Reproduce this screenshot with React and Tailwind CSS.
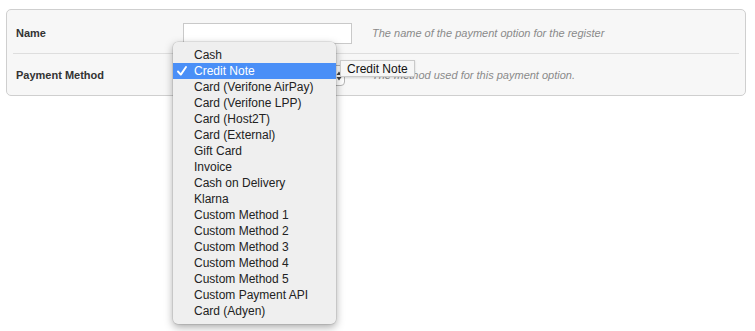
import React from "react";

const methods = [
	"Cash",
	"Credit Note",
	"Card (Verifone AirPay)",
	"Card (Verifone LPP)",
	"Card (Host2T)",
	"Card (External)",
	"Gift Card",
	"Invoice",
	"Cash on Delivery",
	"Klarna",
	"Custom Method 1",
	"Custom Method 2",
	"Custom Method 3",
	"Custom Method 4",
	"Custom Method 5",
	"Custom Payment API",
	"Card (Adyen)",
];

const App = () => {
	const selected = "Credit Note";

	return (
		<div
			className="relative w-[755px] h-[331px] bg-white overflow-hidden"
			style={{ fontFamily: '"Liberation Sans", Arial, sans-serif' }}
		>
			<div className="ml-[6px] mt-[9px] w-[740px] rounded-[5px] border border-[#cfcfcf] bg-[#f7f7f7] px-[6px]">
				<div className="flex items-center h-[44px] pt-[4px] border-b border-[#dedede]">
					<div className="w-[170px] pl-[3px] text-[11px] font-bold text-[#333]">Name</div>
					<input
						type="text"
						className="w-[169px] h-[21px] border border-[#c9c9c9] bg-white outline-none"
					/>
					<div className="ml-[20px] text-[11px] italic text-[#8a8a8a]">
						The name of the payment option for the register
					</div>
				</div>
				<div className="flex items-center h-[41px] pt-[2px]">
					<div className="w-[170px] pl-[3px] text-[11px] font-bold text-[#333]">Payment Method</div>
					<div className="relative w-[162px] h-[21px] rounded-[4px] border border-[#b5b5b5] bg-white">
						<svg className="absolute right-[2px] top-[4px]" width="6" height="12" viewBox="0 0 6 12">
							<path d="M0.5 5 L3 1.5 L5.5 5 Z" fill="#444" />
							<path d="M0.5 7 L3 10.5 L5.5 7 Z" fill="#444" />
						</svg>
					</div>
					<div className="ml-[27px] text-[11px] italic text-[#8a8a8a]">
						The method used for this payment option.
					</div>
				</div>
			</div>

			{/* open select menu */}
			<div className="absolute left-[173px] top-[42px] w-[163px] rounded-[5px] bg-[#efefef] py-[5px] shadow-[0_3px_8px_rgba(0,0,0,0.35),0_0_0_0.5px_rgba(0,0,0,0.15)]">
				{methods.map((m) => {
					const active = m === selected;
					return (
						<div
							key={m}
							className={
								"relative flex items-center h-[16px] pl-[21px] text-[12px] " +
								(active ? "bg-[#4a8ff7] text-white" : "text-[#222]")
							}
						>
							{active && (
								<svg className="absolute left-[4px] top-[3px]" width="10" height="10" viewBox="0 0 10 10">
									<path
										d="M1 5.5 L3.8 8.6 L9 1"
										fill="none"
										stroke="white"
										strokeWidth="1.9"
										strokeLinecap="round"
										strokeLinejoin="round"
									/>
								</svg>
							)}
							{m}
						</div>
					);
				})}
			</div>

			{/* tooltip */}
			<div className="absolute left-[340px] top-[60px] h-[17px] w-[75px] px-[6px] flex items-center border border-[#cacaca] bg-[#f6f6f6] text-[12px] text-[#111] shadow-[0_1px_2px_rgba(0,0,0,0.15)]">
				Credit Note
			</div>
		</div>
	);
};

export default App;
